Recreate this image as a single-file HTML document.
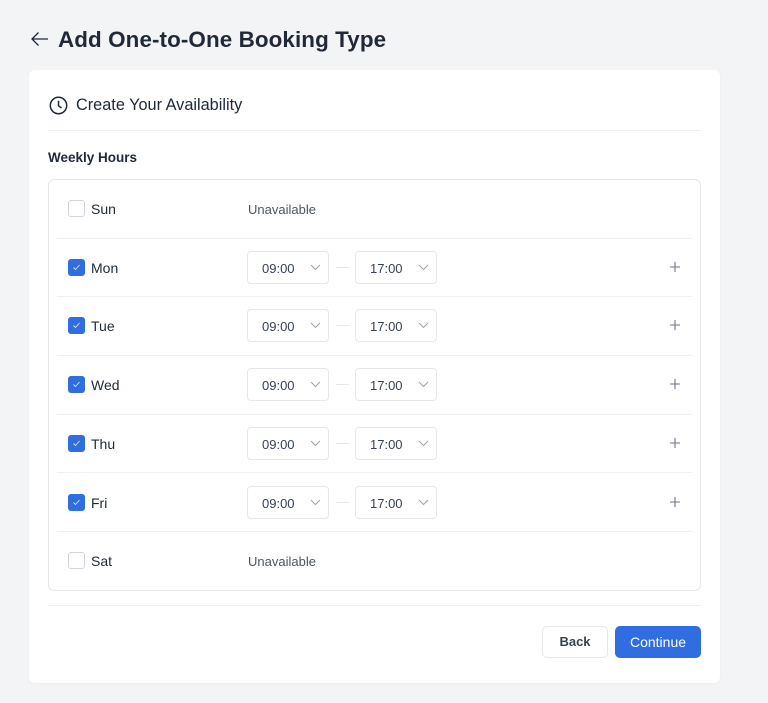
<!DOCTYPE html>
<html><head><meta charset="utf-8"><style>
*{box-sizing:border-box;margin:0;padding:0}
body{width:768px;height:703px;background:#f3f4f6;font-family:"Liberation Sans",sans-serif;position:relative;overflow:hidden;color:#1f2937}
.a{position:absolute}
.card{left:29px;top:70px;width:691px;height:613px;background:#fff;border-radius:6px;box-shadow:0 1px 2px rgba(0,0,0,.04)}
.box{left:48px;top:179px;width:653px;height:412px;border:1px solid #e5e7eb;border-radius:6px}
.cb{width:17px;height:17px;border-radius:3px;border:1px solid #d1d5db;background:#fff}
.cb.on{background:#2f6de1;border-color:#2f6de1}
.day{font-size:14px;color:#1f2937}
.sel{width:82px;height:33px;border:1px solid #e5e7eb;border-radius:4px;font-size:13px;color:#374151;padding:9px 0 0 14px}
.sel svg{position:absolute;right:7px;top:12px}
.dash{width:13px;height:1px;background:#e5e7eb}
.hr{height:1px;background:#eef0f2}
</style></head><body>
<svg class="a" style="left:30px;top:30px" width="19" height="18" viewBox="0 0 19 18"><path d="M18 9H2M8.5 2.5L2 9l6.5 6.5" stroke="#1f2937" stroke-width="1.3" fill="none"/></svg>
<div class="a" style="left:58px;top:27px;font-size:22.4px;font-weight:700;color:#1f2937;letter-spacing:0.1px">Add One-to-One Booking Type</div>
<div class="a card"></div>
<svg class="a" style="left:49px;top:96px" width="19" height="19" viewBox="0 0 19 19"><circle cx="9.5" cy="9.5" r="8.2" stroke="#1f2937" stroke-width="1.5" fill="none"/><path d="M9.5 4.8v5l3 2.2" stroke="#1f2937" stroke-width="1.5" fill="none"/></svg>
<div class="a" style="left:76px;top:96px;font-size:16.3px;color:#1f2937">Create Your Availability</div>
<div class="a hr" style="left:48px;top:130px;width:653px"></div>
<div class="a" style="left:48px;top:150px;font-size:13.5px;font-weight:700;color:#1f2937">Weekly Hours</div>
<div class="a box"></div>
<div id="rows"></div>
<div class="a hr" style="left:48px;top:605px;width:653px"></div>
<div class="a" style="left:542px;top:626px;width:66px;height:32px;border:1px solid #e5e7eb;border-radius:5px;font-size:13px;font-weight:700;color:#374151;text-align:center;line-height:30px">Back</div>
<div class="a" style="left:615px;top:626px;width:86px;height:32px;background:#2f6de1;border-radius:5px;font-size:14px;color:#fff;text-align:center;line-height:32px">Continue</div>
<script>
var d=["Sun","Mon","Tue","Wed","Thu","Fri","Sat"],h="";
var chev='<svg width="11" height="7" viewBox="0 0 11 7"><path d="M1 1l4.5 4.5L10 1" stroke="#9ca3af" stroke-width="1" fill="none"/></svg>';
for(var i=0;i<7;i++){var c=208+i*58.7,on=i>0&&i<6;
h+='<div class="a cb'+(on?' on':'')+'" style="left:68px;top:'+(c-8)+'px">'+(on?'<svg width="15" height="15" viewBox="0 0 15 15"><path d="M4.5 7.5l2 2 4-4.5" stroke="#dbe6fb" stroke-width="0.9" fill="none"/></svg>':'')+'</div>';
h+='<div class="a day" style="left:91px;top:'+(c-7)+'px">'+d[i]+'</div>';
if(on){h+='<div class="a sel" style="left:247px;top:'+(c-16)+'px">09:00'+chev+'</div><div class="a dash" style="left:336px;top:'+c+'px"></div><div class="a sel" style="left:355px;top:'+(c-16)+'px">17:00'+chev+'</div>';
h+='<svg class="a" style="left:669px;top:'+(c-6)+'px" width="12" height="12" viewBox="0 0 12 12"><path d="M6 1v10M1 6h10" stroke="#6b7280" stroke-width="1.1"/></svg>';}
else h+='<div class="a" style="left:248px;top:'+(c-6)+'px;font-size:13px;color:#4b5563">Unavailable</div>';
if(i<6)h+='<div class="a hr" style="left:57px;top:'+(c+29.5)+'px;width:635px"></div>';}
document.getElementById("rows").innerHTML=h;
</script>
</body></html>
